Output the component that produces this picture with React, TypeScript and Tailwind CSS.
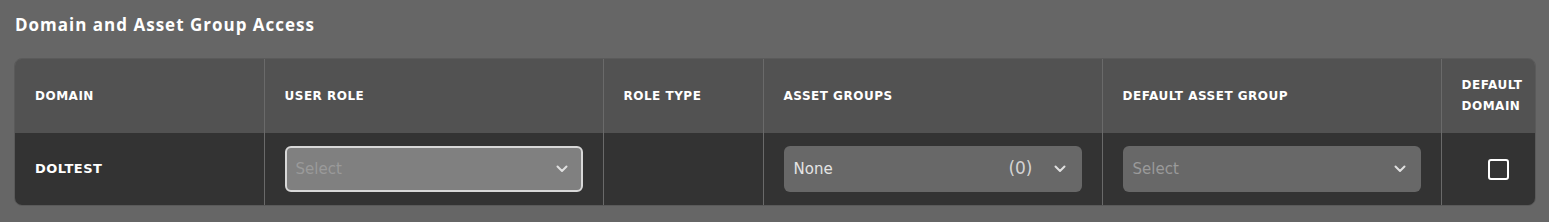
import React from "react";

const Chevron = ({ className = "" }: { className?: string }) => (
  <svg width="12" height="8" viewBox="0 0 12 8" className={className} fill="none">
    <path d="M1.5 1.5 L6 6 L10.5 1.5" stroke="currentColor" strokeWidth="2" strokeLinecap="round" strokeLinejoin="round" />
  </svg>
);

export default function App() {
  const th = "text-left align-middle px-5 py-4 text-[12px] font-bold leading-[21px] tracking-[0.5px] text-white border-l border-[#6a6a6a] first:border-l-0";
  const td = "align-middle px-5 border-l border-[#6a6a6a] first:border-l-0";
  return (
    <div className="w-[1549px] h-[222px] bg-[#666666] pt-[12px] pl-[14px] font-['DejaVu_Sans',sans-serif]">
      <h2 className="font-['Open_Sans',sans-serif] font-bold text-[17px] leading-[26px] tracking-[1px] text-white pl-[1px]">
        Domain and Asset Group Access
      </h2>
      <div className="mt-[20px] w-[1522px] rounded-[8px] overflow-hidden border border-[#5a5a5a]">
        <table className="w-full border-collapse table-fixed">
          <colgroup>
            <col className="w-[249px]" />
            <col className="w-[339px]" />
            <col className="w-[160px]" />
            <col className="w-[339px]" />
            <col className="w-[339px]" />
            <col className="w-[94px]" />
          </colgroup>
          <thead>
            <tr className="bg-[#525252] h-[72px]">
              <th className={th}>DOMAIN</th>
              <th className={th}>USER ROLE</th>
              <th className={th}>ROLE TYPE</th>
              <th className={th}>ASSET GROUPS</th>
              <th className={th}>DEFAULT ASSET GROUP</th>
              <th className={th + " !pr-0"}>DEFAULT DOMAIN</th>
            </tr>
          </thead>
          <tbody>
            <tr className="bg-[#333333] h-[72px]">
              <td className={td + " text-[13px] font-bold tracking-[0.5px] text-white"}>DOLTEST</td>
              <td className={td}>
                <div className="h-[46px] rounded-[6px] border-2 border-[#d8d8d8] bg-[#808080] flex items-center justify-between pl-[9px] pr-[13px]">
                  <span className="text-[15px] text-[#9a9a9a]">Select</span>
                  <Chevron className="text-[#e0e0e0]" />
                </div>
              </td>
              <td className={td}></td>
              <td className={td}>
                <div className="h-[46px] rounded-[6px] bg-[#686868] flex items-center pl-[10px] pr-[16px]">
                  <span className="text-[15px] text-[#e4e4e4] flex-1">None</span>
                  <span className="text-[17px] text-[#d4d4d4] mr-[21px]">(0)</span>
                  <Chevron className="text-[#e0e0e0]" />
                </div>
              </td>
              <td className={td}>
                <div className="h-[46px] rounded-[6px] bg-[#686868] flex items-center justify-between pl-[10px] pr-[15px]">
                  <span className="text-[15px] text-[#9a9a9a]">Select</span>
                  <Chevron className="text-[#e0e0e0]" />
                </div>
              </td>
              <td className={td + " !pr-0"}>
                <div className="flex justify-center">
                  <div className="w-[21px] h-[21px] border-2 border-white rounded-[3px]" />
                </div>
              </td>
            </tr>
          </tbody>
        </table>
      </div>
    </div>
  );
}
